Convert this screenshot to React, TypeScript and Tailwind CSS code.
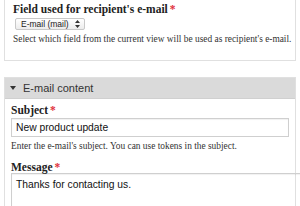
export default function App() {
  const serif = "font-['Liberation_Serif',Georgia,serif]";
  const sans = "font-['Liberation_Sans',Arial,sans-serif]";

  return (
    <div className="w-[300px] h-[206px] overflow-hidden bg-white text-[#333]">
      {/* Recipient field */}
      <div className="ml-[4px] w-[292px] border-x border-b border-[#e0e0e0] px-[8px] pt-[2px] pb-[15px]">
        <div className={`${serif} text-[11.5px] font-bold leading-[14px] text-[#222]`}>
          Field used for recipient's e-mail<span className="ml-[2px] text-[#e0303a]">*</span>
        </div>
        <div className="mt-[2px] ml-[2px] flex h-[12px] w-[70px] items-center justify-between rounded-[2px] border border-[#c8c8c8] bg-gradient-to-b from-white to-[#ececec] pl-[5px] pr-[4px]">
          <span className={`${sans} text-[8.5px] leading-none text-[#222]`}>E-mail (mail)</span>
          <svg width="5" height="8" viewBox="0 0 5 8" className="fill-[#333]">
            <path d="M2.5 0 L5 3 L0 3 Z M2.5 8 L5 5 L0 5 Z" />
          </svg>
        </div>
        <div className={`${serif} mt-[3px] whitespace-nowrap text-[9.4px] leading-[12px] text-[#333]`}>
          Select which field from the current view will be used as recipient's e-mail.
        </div>
      </div>

      {/* E-mail content */}
      <div className="mt-[16px] ml-[4px] w-[292px] border border-[#e0e0e0]">
        <div className="flex h-[21px] items-center gap-[7px] border-b border-[#d0d0d0] bg-[#dadada] pl-[5px]">
          <svg width="6" height="4" viewBox="0 0 6 4" className="fill-[#333]">
            <path d="M0 0 L6 0 L3 4 Z" />
          </svg>
          <span className={`${sans} text-[11px] text-[#333]`}>E-mail content</span>
        </div>
        <div className="px-[6px] pt-[4px]">
          <div className={`${serif} text-[11.5px] font-bold leading-[14px] text-[#222]`}>
            Subject<span className="ml-[2px] text-[#e0303a]">*</span>
          </div>
          <div className="mt-[1px] flex h-[19px] w-[278px] items-center border border-[#cfcfcf] px-[4px] shadow-[inset_0_1px_1px_rgba(0,0,0,0.06)]">
            <span className={`${sans} text-[10.3px] text-[#111]`}>New product update</span>
          </div>
          <div className={`${serif} mt-[3px] whitespace-nowrap text-[9.4px] leading-[12px] text-[#333]`}>
            Enter the e-mail's subject. You can use tokens in the subject.
          </div>
          <div className={`${serif} mt-[9px] text-[11.5px] font-bold leading-[12px] text-[#222]`}>
            Message<span className="ml-[2px] text-[#e0303a]">*</span>
          </div>
          <div className="h-[60px] w-[300px] border border-[#cfcfcf] px-[4px] pt-[4px] shadow-[inset_0_1px_1px_rgba(0,0,0,0.06)]">
            <div className={`${sans} text-[10.3px] leading-[13px] text-[#111]`}>Thanks for contacting us.</div>
          </div>
        </div>
      </div>
    </div>
  );
}
